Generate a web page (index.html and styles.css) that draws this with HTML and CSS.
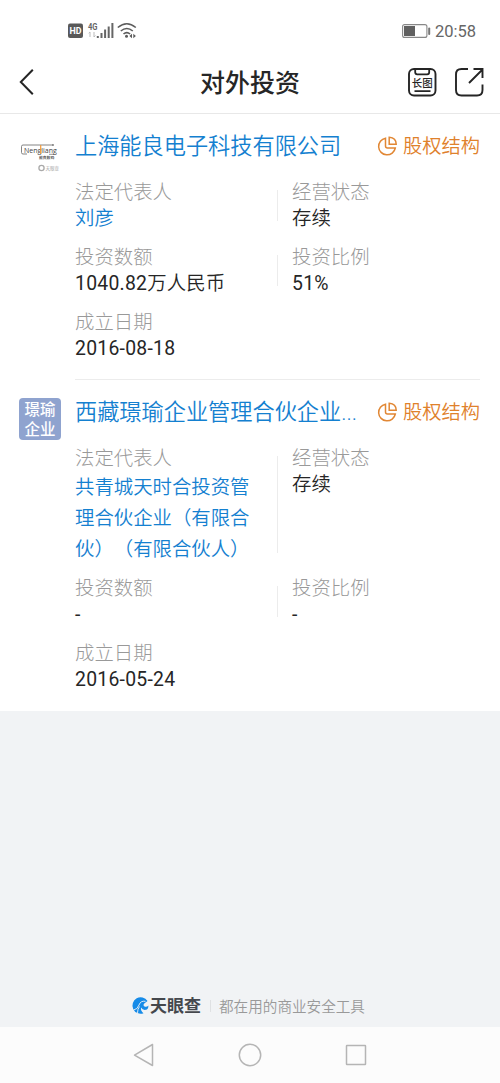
FILE: index.html
```html
<!DOCTYPE html>
<html lang="zh-CN">
<head>
<meta charset="utf-8">
<title>对外投资</title>
<link rel="stylesheet" href="styles.css">
</head>
<body>
<div class="screen">
  <div class="status">
    <svg class="signals" width="72" height="20" viewBox="0 0 72 20">
      <rect x="0" y="3.500" width="15" height="14.500" rx="2" fill="#595959"/>
      <text x="7.500" y="14.300" class="hd" textLength="12" lengthAdjust="spacingAndGlyphs">HD</text>
      <text x="20" y="9.500" class="net" textLength="9.500" lengthAdjust="spacingAndGlyphs">4G</text>
      <path d="M22 12v5M20.700 13.200L22 12M26 12v5l1.400-1.500" stroke="#bbb" stroke-width="1" fill="none"/>
      <path d="M29.800 18v-2M33.500 18v-5M37.100 18v-8.500M40.700 18V6.500M44.400 18V3" stroke="#666" stroke-width="2"/>
      <g fill="none" stroke="#5c5c5c" stroke-width="1.600">
        <path d="M49.800 7.500q9-7.500 18 0M52.800 11q6-5 12 0M55.500 14q3.300-2.800 6.600 0"/>
      </g>
      <circle cx="58.500" cy="16.200" r="1.500" fill="#5c5c5c"/>
      <path d="M64 13.700v4.600l-2.600-2.300zM65.300 13.700v4.600l2.600-2.300z" fill="#5c5c5c"/>
    </svg>
    <div class="power">
      <svg width="29" height="14" viewBox="0 0 29 14">
        <rect x=".6" y=".6" width="24.300" height="12.800" rx="2" fill="#fff" stroke="#888" stroke-width="1.100"/>
        <rect x="2" y="2" width="11" height="10" fill="#606060"/>
        <rect x="26.200" y="3.500" width="2" height="7.500" rx="1" fill="#777"/>
      </svg>
      <span>20:58</span>
    </div>
  </div>
  <header class="nav">
    <svg class="back" width="16" height="28" viewBox="0 0 16 28"><path d="M13.800 1.800L1.800 14l12 12.200" fill="none" stroke="#252525" stroke-width="2"/></svg>
    <h1>对外投资</h1>
    <div class="actions">
      <svg width="29" height="29" viewBox="0 0 29 29">
        <rect x="1" y="1" width="26.500" height="26.500" rx="5" fill="none" stroke="#252525" stroke-width="1.900"/>
        <path d="M7.200 1v3.300q0 2 2 2h10q2 0 2-2V1M6.500 23.200h16" fill="none" stroke="#252525" stroke-width="1.800"/>
        <text x="14.300" y="19" class="long">长图</text>
      </svg>
      <svg width="29" height="29" viewBox="0 0 29 29" fill="none" stroke="#252525" stroke-width="1.900">
        <path d="M13 1H6.500Q1 1 1 6.500V22q0 5.500 5.500 5.500H22q5.500 0 5.500-5.500v-5.500M14 15L27 2M18.500 1h9v9"/>
      </svg>
    </div>
  </header>

  <main class="list">
    <article class="card">
      <svg class="avatar" width="42" height="42" viewBox="0 0 42 42">
        <path d="M34 7H4Q2.500 7 2.500 8.500v6q0 1.500 1.500 1.500h4" fill="none" stroke="#777" stroke-width=".9"/>
        <circle cx="34" cy="7" r=".9" fill="#777"/>
        <path d="M30 16.300h5.500" stroke="#777" stroke-width=".8"/>
        <text x="5" y="14.500" class="wordmark">Nengliang</text>
        <path d="M21.700 7v9" stroke="#f29a38" stroke-width="1.200"/>
        <text x="20" y="20.500" class="wordmark-cn">能良数码</text>
        <circle cx="22.500" cy="30" r="2.600" fill="none" stroke="#aaa" stroke-width="1.300"/>
        <text x="26.500" y="32" class="watermark">天眼查</text>
      </svg>
      <div class="info">
        <div class="head">
          <h2>上海能良电子科技有限公司</h2>
          <div class="equity">
            <svg width="21" height="21" viewBox="0 0 21 21" fill="none" stroke="#e18734" stroke-width="1.500"><path d="M8.500 2.200a8.400 8.400 0 1 0 9.800 9.800H10.500q-2 0-2-2z"/><path d="M12.200 1.300v7h7q0-6.500-7-7z"/></svg>
            <span>股权结构</span>
          </div>
        </div>
        <div class="row">
          <div class="field"><div class="label">法定代表人</div><div class="value link">刘彦</div></div>
          <div class="field side"><div class="label">经营状态</div><div class="value">存续</div></div>
        </div>
        <div class="row">
          <div class="field"><div class="label">投资数额</div><div class="value"><span class="num">1040.82</span>万人民币</div></div>
          <div class="field side"><div class="label">投资比例</div><div class="value num">51%</div></div>
        </div>
        <div class="row">
          <div class="field"><div class="label">成立日期</div><div class="value num">2016-08-18</div></div>
        </div>
      </div>
    </article>
    <article class="card">
      <div class="avatar badge">璟瑜<br>企业</div>
      <div class="info">
        <div class="head">
          <h2>西藏璟瑜企业管理合伙企业...</h2>
          <div class="equity">
            <svg width="21" height="21" viewBox="0 0 21 21" fill="none" stroke="#e18734" stroke-width="1.500"><path d="M8.500 2.200a8.400 8.400 0 1 0 9.800 9.800H10.500q-2 0-2-2z"/><path d="M12.200 1.300v7h7q0-6.500-7-7z"/></svg>
            <span>股权结构</span>
          </div>
        </div>
        <div class="row">
          <div class="field"><div class="label">法定代表人</div><div class="value link multi">共青城天时合投资管<br>理合伙企业（有限合<br>伙）（有限合伙人）</div></div>
          <div class="field side"><div class="label">经营状态</div><div class="value">存续</div></div>
        </div>
        <div class="row">
          <div class="field"><div class="label">投资数额</div><div class="value num">-</div></div>
          <div class="field side"><div class="label">投资比例</div><div class="value num">-</div></div>
        </div>
        <div class="row">
          <div class="field"><div class="label">成立日期</div><div class="value num">2016-05-24</div></div>
        </div>
      </div>
    </article>
  </main>

  <footer class="brand">
    <svg width="17" height="17" viewBox="0 0 17 17">
      <path d="M15.500 4A8.200 8.200 0 1 0 11.500 16.200Q8.500 14 9 10.500 11 14 15 12.500 16.500 11 16.500 8.500 14.500 10.500 12.500 9.500 10.500 8 12.500 6.200 14.500 5 15.500 4z" fill="#168be8"/>
      <path d="M13.500 4.300Q8.500 3.500 7 8T1.500 13M7.500 9.500Q5.500 12 5.500 16" fill="none" stroke="#f1f3f5" stroke-width=".9"/>
    </svg>
    <strong>天眼查</strong>
    <i></i>
    <span>都在用的商业安全工具</span>
  </footer>
  <div class="keys">
    <svg width="22" height="24" viewBox="0 0 22 24"><path d="M19.500 1.500v21L1.500 12.200z" fill="none" stroke="#b5b5b5" stroke-width="1.500" stroke-linejoin="round"/></svg>
    <svg width="24" height="24" viewBox="0 0 24 24"><circle cx="12" cy="12" r="10.700" fill="none" stroke="#b5b5b5" stroke-width="1.500"/></svg>
    <svg width="22" height="22" viewBox="0 0 22 22"><rect x="1.500" y="1.500" width="19" height="19" rx=".5" fill="none" stroke="#b5b5b5" stroke-width="1.500"/></svg>
  </div>
</div>
</body>
</html>
```
FILE: styles.css
```css
* { box-sizing: border-box; }
body { margin: 0; background: #f1f3f5; font-family: Roboto, "Noto Sans CJK SC", sans-serif; color: #262626; }
.screen { width: 500px; height: 1083px; display: flex; flex-direction: column; overflow: hidden; }
h1, h2 { margin: 0; font-weight: 400; }
svg { display: block; flex: none; overflow: visible; }

.status { height: 52px; background: #fff; display: flex; justify-content: space-between; padding: 20px 24px 0 68px; }
.power { display: flex; gap: 4px; height: 22px; align-items: center; font-size: 16.500px; color: #666; }
.hd { font: 700 9.500px Roboto, sans-serif; fill: #fff; text-anchor: middle; }
.net { font: 700 8.500px Roboto, sans-serif; fill: #666; }

.nav { height: 62px; background: #fff; border-bottom: 1px solid #e8e8e8; display: grid; grid-template-columns: 1fr auto 1fr; align-items: center; padding: 0 16px 1px 19px; }
.nav h1 { font-size: 25px; font-weight: 500; line-height: 36px; margin: 4px 0 0 -3px; white-space: nowrap; }
.actions { display: flex; justify-content: flex-end; gap: 18px; }
.long { font: 500 10.500px "Noto Sans CJK SC", sans-serif; fill: #252525; text-anchor: middle; }

.list { background: #fff; height: 597px; flex: none; }
.card { display: flex; gap: 14px; padding-left: 19px; }
.card + .card .info { border: 0; }
.avatar { width: 42px; height: 42px; margin-top: 18px; flex: none; }
.card svg.avatar { margin-top: 24px; }
.badge { background: #8fa3cf; border-radius: 4px; color: #fff; font-size: 15.500px; font-weight: 500; line-height: 20px; text-align: center; padding-top: 2px; }
.wordmark { font: 7px "Open Sans", sans-serif; fill: #444; }
.wordmark-cn { font: 700 3.800px "Noto Sans CJK SC", sans-serif; fill: #555; }
.watermark { font: 4.500px "Noto Sans CJK SC", sans-serif; fill: #aaa; }
.info { width: 405px; height: 266px; padding-top: 17px; border-bottom: 1px solid #ececec; font-weight: 350; font-family: Roboto, "Noto Sans CJK SC", sans-serif; }
.head { display: flex; justify-content: space-between; align-items: center; height: 30px; margin-bottom: 18px; white-space: nowrap; }
.head h2 { font-size: 22.200px; line-height: 30px; color: #1480d0; font-weight: 350; }
.equity { display: flex; align-items: center; gap: 5px; font-size: 19.300px; line-height: 28px; color: #df812c; }
.equity span { padding-top: 2px; }
.equity svg { margin-left: -1px; }
.row { display: flex; margin-bottom: 11px; line-height: 27px; font-size: 19.400px; }
.row:has(.multi) { margin-bottom: 10px; }
.field { width: 202px; white-space: nowrap; }
.side { position: relative; padding-left: 15px; }
.side::before { content: ""; position: absolute; left: 0; top: 11px; bottom: 12px; width: 1px; background: #ececec; }
.label { color: #999; font-weight: 300; }
.value { color: #262626; letter-spacing: .12px; margin: -1px 0 1px; }
.value.link { color: #1480d0; letter-spacing: 0; }
.num { font-weight: 400; letter-spacing: .25px; }
.value.multi { line-height: 31px; margin: 0; text-spacing-trim: space-all; }

.brand { margin-top: auto; height: 42px; display: flex; align-items: center; padding-left: 132px; color: #a0a4a8; font-size: 14.600px; }
.brand svg { margin-top: -2px; }
.brand strong { font-family: "Noto Sans CJK SC", sans-serif; font-size: 17px; line-height: 20px; font-weight: 700; color: #45484d; margin: -3px 0 0 1px; }
.brand i { width: 1px; height: 12px; background: #dfe1e3; margin: 0 8px 0 9px; }
.brand span { font-weight: 350; color: #999; margin-top: -1px; }
.keys { height: 56px; flex: none; background: #fcfcfc; display: flex; align-items: center; justify-content: space-between; padding: 0 133px; }
```
